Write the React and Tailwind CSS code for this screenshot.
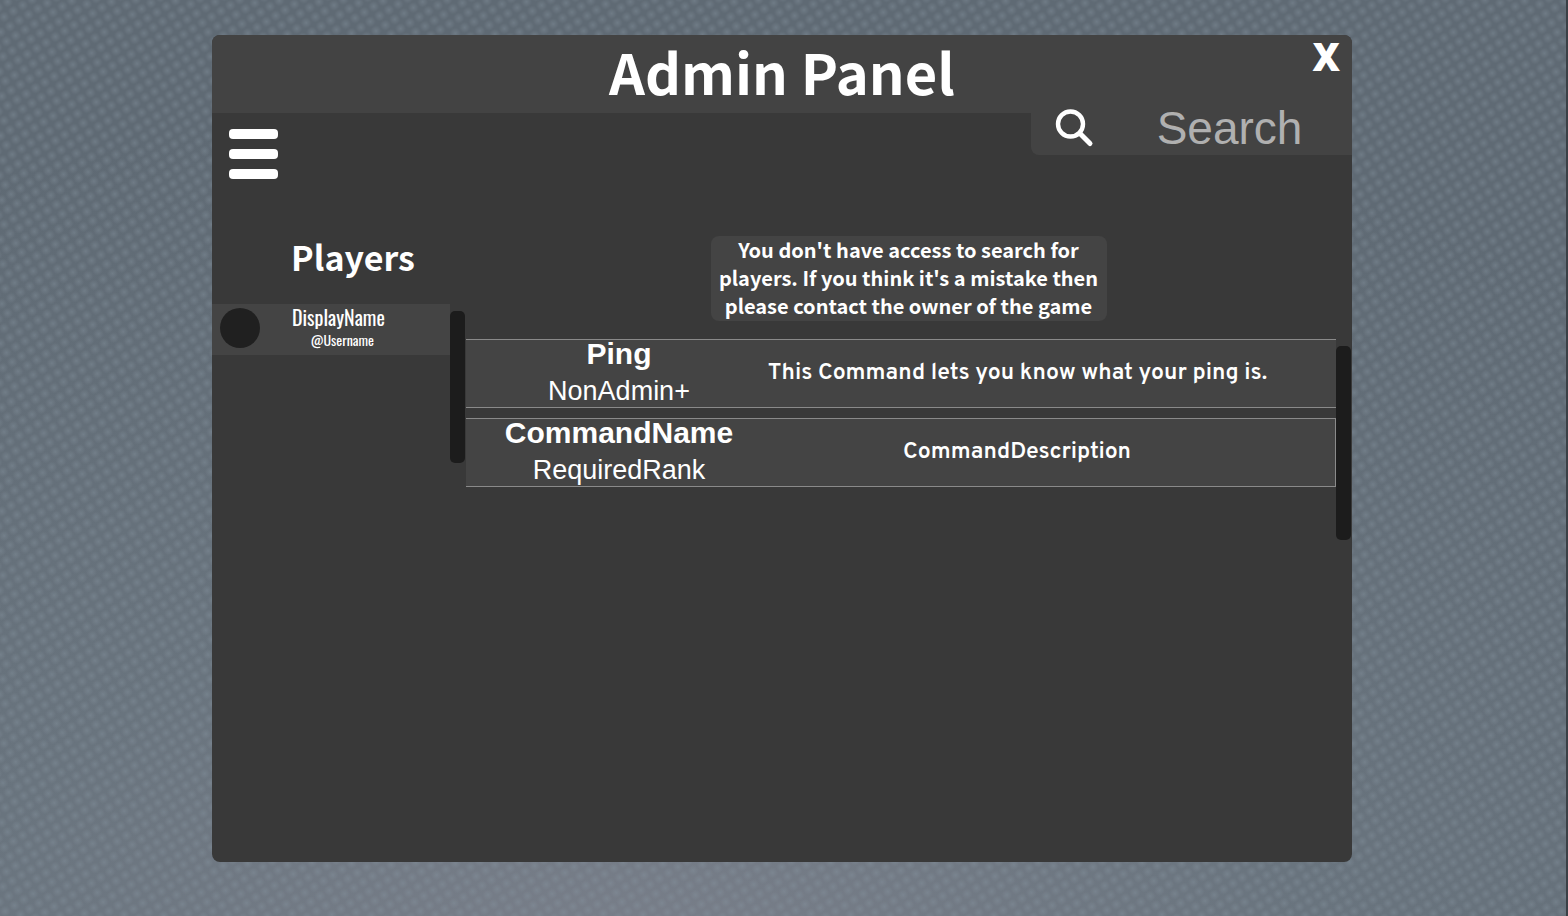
import React from 'react';

const players = [{ displayName: 'DisplayName', username: '@Username' }];

const commands = [
  {
    name: 'Ping',
    rank: 'NonAdmin+',
    description: 'This Command lets you know what your ping is.',
    border: 'border-y',
  },
  {
    name: 'CommandName',
    rank: 'RequiredRank',
    description: 'CommandDescription',
    border: 'border-y border-r',
  },
];

function Backdrop() {
  return (
    <svg className="absolute inset-0 w-full h-full" aria-hidden="true">
      <defs>
        <radialGradient id="floor" cx="0.4" cy="1.1" r="1">
          <stop offset="0" stopColor="#7b808b" />
          <stop offset="0.45" stopColor="#69747e" />
          <stop offset="1" stopColor="#5f6a74" />
        </radialGradient>
        <radialGradient id="stud">
          <stop offset="0" stopColor="#8794a0" stopOpacity="0.4" />
          <stop offset="1" stopColor="#8794a0" stopOpacity="0" />
        </radialGradient>
        <pattern id="studs" width="11" height="11" patternUnits="userSpaceOnUse" patternTransform="rotate(-32)">
          <circle cx="5.5" cy="5.5" r="5.5" fill="url(#stud)" />
        </pattern>
      </defs>
      <rect width="100%" height="100%" fill="url(#floor)" />
      <rect width="100%" height="100%" fill="url(#studs)" />
    </svg>
  );
}

function Header() {
  return (
    <header className="h-[78px] shrink-0 grid grid-cols-[1fr_auto_1fr] rounded-t-lg bg-[#434343]">
      <h1 className="col-start-2 text-[56px] leading-[72px] font-bold">Admin Panel</h1>
      <button
        type="button"
        aria-label="Close"
        className="justify-self-end self-start mr-3 text-[38px] leading-[42px] font-extrabold font-['Open_Sans',sans-serif]"
      >
        X
      </button>
    </header>
  );
}

function Toolbar() {
  return (
    <div className="h-[123px] shrink-0 flex items-start justify-between">
      <button type="button" aria-label="Menu" className="mt-4 ml-[17px] flex flex-col gap-[10px]">
        <span className="w-[49px] h-[10px] rounded-[4px] bg-white" />
        <span className="w-[49px] h-[10px] rounded-[4px] bg-white" />
        <span className="w-[49px] h-[10px] rounded-[4px] bg-white" />
      </button>
      <label className="w-[321px] h-[42px] flex items-start rounded-bl-lg bg-[#434343]">
        <svg viewBox="0 0 40 40" className="ml-6 -mt-[5px] w-10 h-10 shrink-0" fill="none" stroke="white" strokeLinecap="round">
          <circle cx="15.5" cy="16" r="12.5" strokeWidth="4.4" />
          <path d="M25 25.5 35 35.5" strokeWidth="5" />
        </svg>
        <input
          type="text"
          aria-label="Search"
          placeholder="Search"
          className="ml-3 w-[245px] min-w-0 h-[42px] -mt-[6px] text-center font-['Liberation_Sans',sans-serif] text-[46px] leading-[42px] bg-transparent outline-none placeholder:text-[#b0b0b0]"
        />
      </label>
    </div>
  );
}

function Players() {
  return (
    <aside className="w-[254px] shrink-0">
      <h2 className="h-[68px] pl-7 text-center text-[34px] leading-[42px] font-bold">Players</h2>
      <div className="pr-px flex items-start">
        <ul className="flex-1">
          {players.map((player) => (
            <li key={player.username} className="h-[51px] flex items-start pl-2 bg-[#444444]">
              <span className="mt-1 w-10 h-10 shrink-0 rounded-full bg-[#202020]" />
              <div className="ml-8 flex flex-col items-center font-['Oswald',sans-serif]">
                <span className="text-[20px] leading-[26px]">{player.displayName}</span>
                <span className="pl-2 text-[14px] leading-5">{player.username}</span>
              </div>
            </li>
          ))}
        </ul>
        <div className="mt-[7px] w-[15px] h-[152px] rounded-[5px] bg-[#1c1c1c]" />
      </div>
    </aside>
  );
}

function Commands() {
  return (
    <main className="flex-1 min-w-0 pr-px">
      <p className="mx-auto w-[396px] h-[85px] px-1 rounded-lg bg-[#444444] text-center text-[20px] leading-7 font-bold">
        You don't have access to search for players. If you think it's a mistake then please contact the owner of the game
      </p>
      <div className="mt-[18px] flex items-start">
        <ul className="flex-1 min-w-0 flex flex-col gap-[10px]">
          {commands.map((command) => (
            <li key={command.name} className={`h-[69px] flex items-start bg-[#444444] border-[#8a8a8a] ${command.border}`}>
              <div className="ml-[25px] w-64 shrink-0 text-center font-['Liberation_Sans',sans-serif]">
                <h3 className="text-[30px] leading-7 font-bold">{command.name}</h3>
                <p className="text-[27px] leading-[46px]">{command.rank}</p>
              </div>
              <p className="flex-1 mr-12 mt-[18px] text-center text-[23px] leading-8 font-semibold font-['Overpass','Roboto',sans-serif]">
                {command.description}
              </p>
            </li>
          ))}
        </ul>
        <div className="mt-[7px] w-[15px] h-[194px] shrink-0 rounded-[5px] bg-[#1c1c1c]" />
      </div>
    </main>
  );
}

export default function App() {
  return (
    <div className="relative min-h-screen flex pl-[212px] pr-[214px] pt-[35px] pb-[54px] border-r-2 border-[#3a4046] text-white font-['Noto_Sans_CJK_SC','Noto_Sans',sans-serif]">
      <Backdrop />
      <div className="relative flex-1 min-w-0 flex flex-col rounded-lg bg-[#393939]">
        <Header />
        <Toolbar />
        <div className="flex items-start">
          <Players />
          <Commands />
        </div>
      </div>
    </div>
  );
}
